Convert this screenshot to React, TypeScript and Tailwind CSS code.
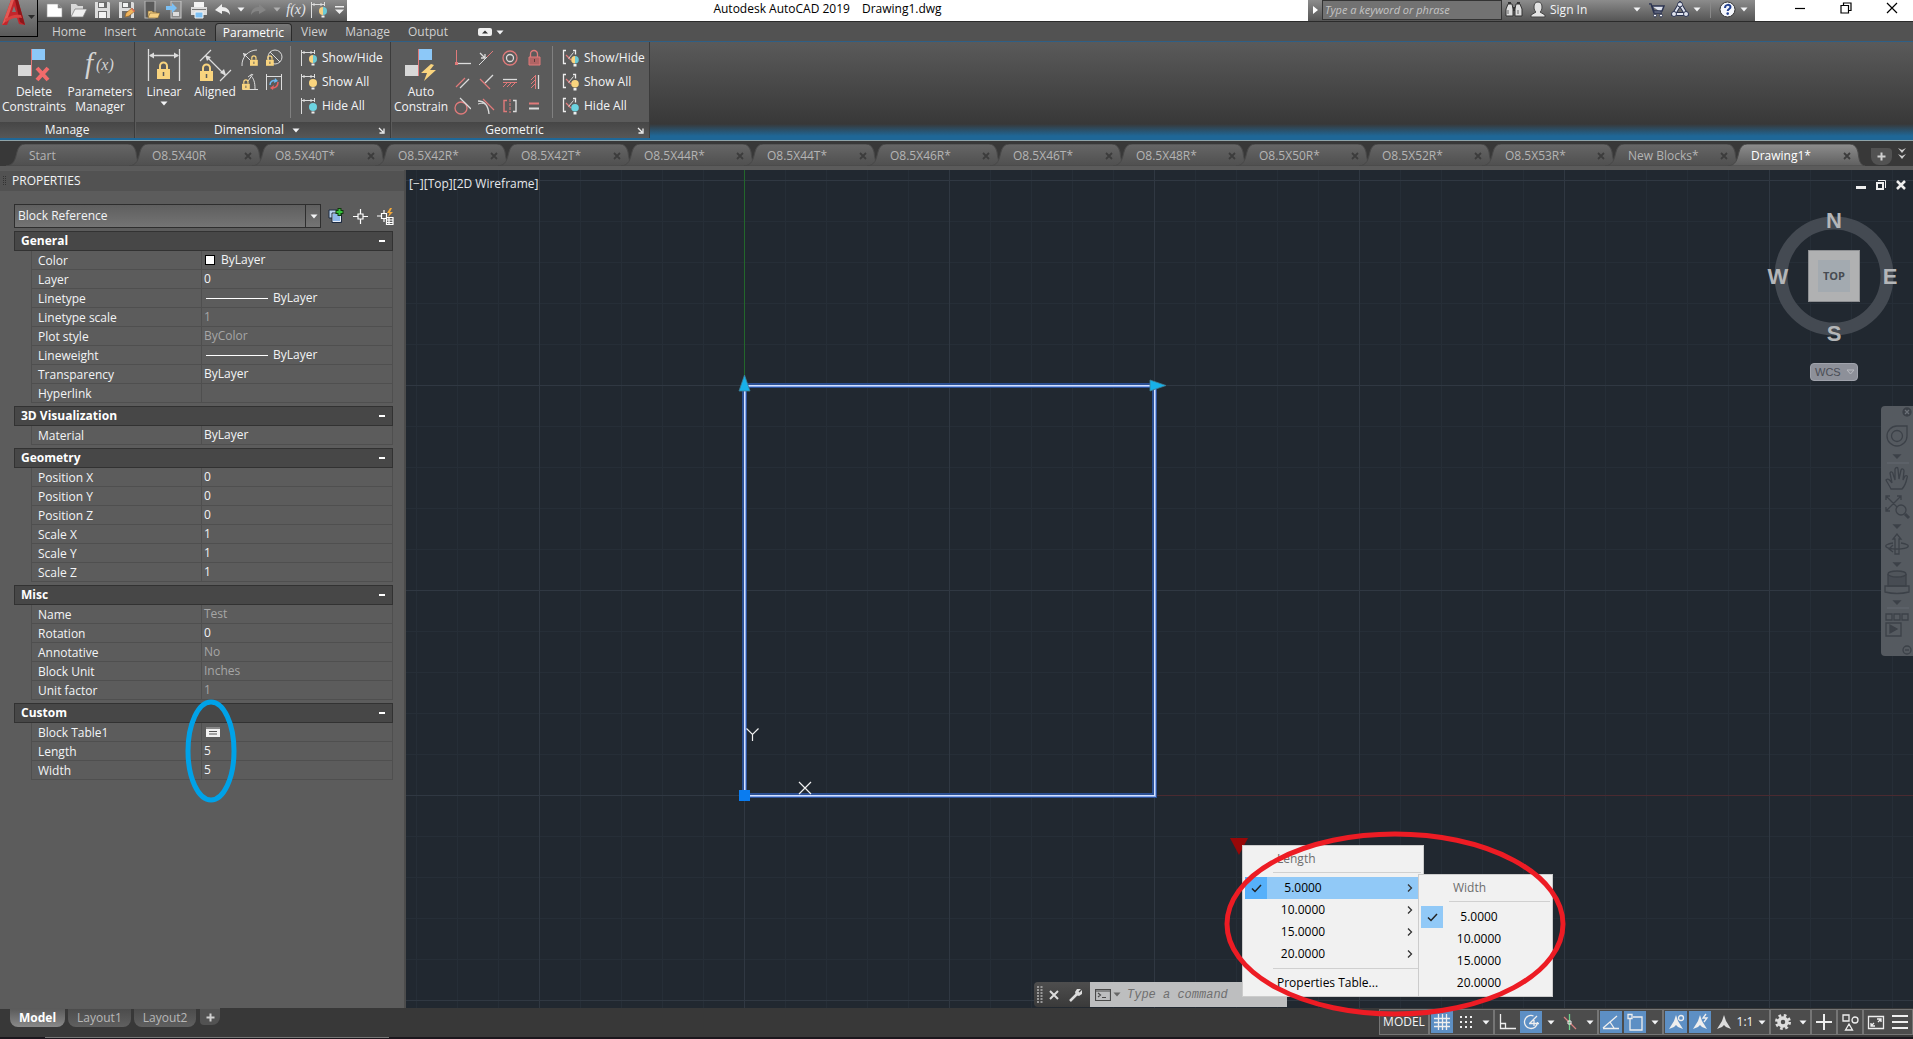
import React from 'react';

interface PropertyRow {
  name: string;
  value: string;
  muted?: boolean;
  kind?: 'swatch' | 'line' | 'table';
}

interface PropertySection {
  title: string;
  rows: PropertyRow[];
}

const ribbonTabs = ['Home', 'Insert', 'Annotate', 'Parametric', 'View', 'Manage', 'Output'];

const fileTabs = [
  'Start',
  'O8.5X40R',
  'O8.5X40T*',
  'O8.5X42R*',
  'O8.5X42T*',
  'O8.5X44R*',
  'O8.5X44T*',
  'O8.5X46R*',
  'O8.5X46T*',
  'O8.5X48R*',
  'O8.5X50R*',
  'O8.5X52R*',
  'O8.5X53R*',
  'New Blocks*',
  'Drawing1*',
];

const sections: PropertySection[] = [
  {
    title: 'General',
    rows: [
      { name: 'Color', value: 'ByLayer', kind: 'swatch' },
      { name: 'Layer', value: '0' },
      { name: 'Linetype', value: 'ByLayer', kind: 'line' },
      { name: 'Linetype scale', value: '1', muted: true },
      { name: 'Plot style', value: 'ByColor', muted: true },
      { name: 'Lineweight', value: 'ByLayer', kind: 'line' },
      { name: 'Transparency', value: 'ByLayer' },
      { name: 'Hyperlink', value: '' },
    ],
  },
  { title: '3D Visualization', rows: [{ name: 'Material', value: 'ByLayer' }] },
  {
    title: 'Geometry',
    rows: [
      { name: 'Position X', value: '0' },
      { name: 'Position Y', value: '0' },
      { name: 'Position Z', value: '0' },
      { name: 'Scale X', value: '1' },
      { name: 'Scale Y', value: '1' },
      { name: 'Scale Z', value: '1' },
    ],
  },
  {
    title: 'Misc',
    rows: [
      { name: 'Name', value: 'Test', muted: true },
      { name: 'Rotation', value: '0' },
      { name: 'Annotative', value: 'No', muted: true },
      { name: 'Block Unit', value: 'Inches', muted: true },
      { name: 'Unit factor', value: '1', muted: true },
    ],
  },
  {
    title: 'Custom',
    rows: [
      { name: 'Block Table1', value: '', kind: 'table' },
      { name: 'Length', value: '5' },
      { name: 'Width', value: '5' },
    ],
  },
];

const Caret: React.FC<{ className?: string }> = ({ className = 'text-gray-100' }) => (
  <svg width="8" height="5" viewBox="0 0 8 5" className={`shrink-0 ${className}`}>
    <path d="M0.5 0.5h7L4 4.5z" fill="currentColor" />
  </svg>
);

/* ---------- Title bar ---------- */

const quickIcons: { label: string; art: React.ReactNode }[] = [
  {
    label: 'New',
    art: <path d="M1 3h11l4 4v9H1z M12 3v4h4" fill="#fff" stroke="#999" strokeWidth="0.6" />,
  },
  {
    label: 'Open',
    art: (
      <>
        <path d="M1 15V3h5l2 2h5v3" fill="#d8d8d8" />
        <path d="M1 16l4-8h12l-4 8z" fill="#efefef" stroke="#777" strokeWidth="0.7" />
      </>
    ),
  },
  {
    label: 'Save',
    art: (
      <>
        <path d="M1 1h14l1 1v15H1z" fill="#dcdcdc" />
        <path d="M4 1h9v6H4zM4 10h9v7H4z" fill="#6d6d6d" />
        <path d="M5 2h5v4H5zM5 11h7v6H5z" fill="#f2f2f2" />
      </>
    ),
  },
  {
    label: 'Save As',
    art: (
      <>
        <path d="M1 1h14l1 1v15H1z" fill="#dcdcdc" />
        <path d="M4 1h9v6H4zM4 10h9v7H4z" fill="#6d6d6d" />
        <path d="M5 2h5v4H5z" fill="#f2f2f2" />
        <path d="M7 16l1-4 6-5 3 3-6 5z" fill="#f0b45c" stroke="#8a5a20" strokeWidth="0.6" />
        <path d="M13 8l1-1 3 3-1 1z" fill="#d86b5a" />
      </>
    ),
  },
  {
    label: 'Open from Web',
    art: (
      <>
        <rect x="3" y="0" width="10" height="17" fill="#5a5a5a" stroke="#b8b8b8" />
        <path d="M6 17l2-5h10l-2 5zM6 16v-6h4l1 1h4" fill="#f5cf82" stroke="#7a6030" strokeWidth="0.6" />
      </>
    ),
  },
  {
    label: 'Save to Web',
    art: (
      <>
        <rect x="5" y="0" width="10" height="17" fill="#8a8a8a" stroke="#c8c8c8" />
        <rect x="7" y="11" width="6" height="4" fill="#ddd" />
        <path d="M0 5h6V2l5 5-5 5V9H0z" fill="#7cc0f4" />
      </>
    ),
  },
  {
    label: 'Plot',
    art: (
      <>
        <path d="M4 1h10v5H4z" fill="#f4f4f4" />
        <path d="M1 6h16v8H1z" fill="#dedede" />
        <path d="M2 8h14v1H2z" fill="#777" />
        <path d="M5 11h8v6H5z" fill="#7cc0f4" stroke="#f4f4f4" />
      </>
    ),
  },
  { label: 'Undo', art: <path d="M1 9l7-6v3c5 0 8 3 8 8-2-3-4-4-8-4v3z" fill="#eee" /> },
];

const DimBulb: React.FC<{ left: string; right: string }> = ({ left, right }) => (
  <svg width="18" height="18" viewBox="0 0 18 18" className="shrink-0">
    <path d="M1.5 1v16M1 3.5h13M14.5 1v4M4 2v3M11 2v3" stroke="#ddd" fill="none" />
    <path d="M13 6a4 4 0 0 0 0 8z" fill={left} />
    <path d="M13 6a4 4 0 0 1 0 8z" fill={right} />
    <path d="M11.5 14.5h3v2h-3z" fill="#eee" />
  </svg>
);

const GeoBulb: React.FC<{ left: string; right: string }> = ({ left, right }) => (
  <svg width="18" height="18" viewBox="0 0 18 18" className="shrink-0">
    <path d="M4 1.5H1.5v13H4M11 1.5h2.5v4" stroke="#eee" strokeWidth="1.3" fill="none" />
    <path d="M4 6l5 5" stroke="#e07a7a" strokeWidth="1.2" />
    <path d="M6.5 9.5l5-6" stroke="#ddd" />
    <path d="M13 7a3.8 3.8 0 0 0 0 7.6z" fill={left} />
    <path d="M13 7a3.8 3.8 0 0 1 0 7.6z" fill={right} />
    <path d="M11.5 15h3v2.5h-3z" fill="#eee" />
  </svg>
);

const TitleBar = () => (
  <header className="flex h-[22px] shrink-0 justify-between border-b border-[#2b2b2b] bg-white">
    <div className="flex w-[347px] items-center bg-linear-to-b from-[#8c8c8c] to-[#555] pb-[2px] pl-[43px]">
      {quickIcons.map((icon) => (
        <button key={icon.label} aria-label={icon.label} className="flex w-6 justify-center">
          <svg width="18" height="18" viewBox="0 0 18 18">
            {icon.art}
          </svg>
        </button>
      ))}
      <button aria-label="Undo list" className="flex w-3 justify-center">
        <Caret />
      </button>
      <button aria-label="Redo" className="flex w-[22px] justify-center">
        <svg width="18" height="18" viewBox="0 0 18 18">
          <path d="M17 9l-7-6v3c-5 0-8 3-8 8 2-3 4-4 8-4v3z" fill="#858585" />
        </svg>
      </button>
      <button aria-label="Redo list" className="flex w-4 justify-center">
        <Caret className="text-[#b0b0b0]" />
      </button>
      <button className="w-[22px] font-['Liberation_Serif'] text-sm leading-4 text-gray-200 italic">f(x)</button>
      <button aria-label="Dimensional constraints" className="flex w-6 justify-center">
        <DimBulb left="#f5cf82" right="#6cc9d4" />
      </button>
      <button aria-label="Customize" className="flex w-4 justify-center">
        <svg width="9" height="8" viewBox="0 0 9 8">
          <path d="M0 0h9v1.5H0zM0 3.5h9L4.5 8z" fill="#eee" />
        </svg>
      </button>
    </div>

    <div className="flex items-center gap-3 pb-1 text-xs text-black">
      <span>Autodesk AutoCAD 2019</span>
      <span>Drawing1.dwg</span>
    </div>

    <div className="flex">
      <div className="flex w-[447px] items-center bg-linear-to-b from-[#8c8c8c] to-[#555] pb-[2px]">
        <button aria-label="Collapse search" className="flex w-[14px] justify-center">
          <svg width="5" height="8" viewBox="0 0 5 8">
            <path d="M0 0l5 4-5 4z" fill="#fff" />
          </svg>
        </button>
        <input
          aria-label="Search"
          placeholder="Type a keyword or phrase"
          className="h-5 w-[180px] border border-[#333] bg-[#727272] px-[2px] pb-px text-[11px] text-white italic placeholder:text-[#c4c4c4]"
        />
        <button aria-label="Find" className="flex w-[23px] justify-center">
          <svg width="18" height="17" viewBox="0 0 18 17">
            <path d="M3 3h4l1 5v7H1V8zM11 3h4l2 5v7h-7V8z" fill="#dedede" stroke="#333" />
            <path d="M8 6h2v4H8zM3 1h3v2H3zM12 1h3v2h-3z" fill="#333" />
            <path d="M3 9v4M13 9v4" stroke="#666" />
          </svg>
        </button>
        <button className="flex w-[116px] items-center gap-1 pl-[5px] text-xs text-gray-100">
          <svg width="16" height="17" viewBox="0 0 16 17">
            <path d="M8 1c3 0 4 2 4 5s-1 4-2 5l5 3v2H1v-2l5-3c-1-1-2-2-2-5s1-5 4-5z" fill="#e4e4e4" stroke="#444" />
          </svg>
          Sign In
          <span className="ml-auto">
            <Caret />
          </span>
        </button>
        <button aria-label="App store" className="flex w-[30px] justify-center">
          <svg width="17" height="16" viewBox="0 0 17 16">
            <path d="M1 2h2l3 9h8M4 4h12l-2 5H6z" fill="#dfe3ee" stroke="#2b3350" strokeWidth="1.5" />
            <circle cx="7" cy="13.5" r="1.5" fill="#fff" stroke="#2b3350" />
            <circle cx="13" cy="13.5" r="1.5" fill="#fff" stroke="#2b3350" />
          </svg>
        </button>
        <button aria-label="Stay connected" className="flex w-[34px] items-center gap-1">
          <svg width="18" height="17" viewBox="0 0 18 17">
            <path d="M9 3L3 13h12z" fill="none" stroke="#2b3350" strokeWidth="4" />
            <path d="M9 3L3 13h12z" fill="none" stroke="#dfe3ee" strokeWidth="2" />
            <circle cx="9" cy="3.5" r="2.5" fill="#dfe3ee" stroke="#2b3350" />
            <circle cx="3" cy="13" r="2.5" fill="#dfe3ee" stroke="#2b3350" />
            <circle cx="15" cy="13" r="2.5" fill="#dfe3ee" stroke="#2b3350" />
          </svg>
          <Caret />
        </button>
        <button aria-label="Help" className="ml-[5px] flex items-center gap-1 border-l border-[#888] pl-2">
          <svg width="17" height="17" viewBox="0 0 17 17">
            <circle cx="8.5" cy="8.5" r="7.5" fill="#f4f6fb" stroke="#333" />
            <path d="M6 7c0-4 5.5-4 5.5-1 0 2-2.8 2-2.8 4" fill="none" stroke="#23408e" strokeWidth="2" />
            <circle cx="8.7" cy="12.6" r="1.3" fill="#23408e" />
          </svg>
          <Caret />
        </button>
      </div>
      {['Minimize', 'Restore', 'Close'].map((name) => (
        <button key={name} aria-label={name} className="flex w-[46px] justify-center pt-[2px] pl-1 first-of-type:ml-5">
          <svg width="12" height="12" viewBox="0 0 12 12" fill="none" stroke="#000" strokeWidth="1.2">
            {name === 'Minimize' && <path d="M1 6.5h10" />}
            {name === 'Restore' && <path d="M1 3.5h7.5V11H1zM3.5 3.5V1H11v7.5H8.5" />}
            {name === 'Close' && <path d="M1 1l10 10M11 1L1 11" />}
          </svg>
        </button>
      ))}
    </div>
  </header>
);

/* ---------- Ribbon ---------- */

const Padlock: React.FC<{ x: number; y: number; s?: number }> = ({ x, y, s = 1 }) => (
  <g transform={`translate(${x} ${y}) scale(${s})`}>
    <path d="M3 8V5a3.5 3.5 0 0 1 7 0v3" fill="none" stroke="#f9d47e" strokeWidth="2" />
    <path d="M0 8h13v10H0z" fill="#f9d47e" />
    <path d="M6.5 11v4" stroke="#5b5b5b" strokeWidth="1.5" />
  </g>
);

const BigButton: React.FC<{
  lines: string[];
  className: string;
  caret?: boolean;
  children: React.ReactNode;
}> = ({ lines, className, caret, children }) => (
  <button className={`flex flex-col items-center pt-[6px] text-xs leading-[15px] text-gray-100 ${className}`}>
    <svg width="34" height="34" viewBox="0 0 34 34" className="mb-[2px]">
      {children}
    </svg>
    {lines.map((line) => (
      <span key={line}>{line}</span>
    ))}
    {caret && (
      <span className="pt-[2px]">
        <Caret />
      </span>
    )}
  </button>
);

const SmallIcon: React.FC<{ label: string; children: React.ReactNode }> = ({ label, children }) => (
  <button aria-label={label} className="flex h-6 w-6 items-center justify-center">
    <svg width="18" height="18" viewBox="0 0 18 18" fill="none">
      {children}
    </svg>
  </button>
);

const PanelTitle: React.FC<{ title: string; caret?: boolean; launcher?: boolean }> = ({ title, caret, launcher }) => (
  <div className="flex h-4 items-center bg-linear-to-b from-[#464646] to-[#575757] text-xs leading-4 text-gray-100">
    <span className="flex flex-1 items-center justify-center gap-2">
      {title}
      {caret && <Caret />}
    </span>
    {launcher && (
      <button aria-label={`${title} settings`} className="w-3">
        <svg width="7" height="7" viewBox="0 0 7 7">
          <path d="M1 1l4 4M6 1.5V6H1.5" stroke="#eee" strokeWidth="1.3" fill="none" />
        </svg>
      </button>
    )}
  </div>
);

const visibility = [
  { label: 'Show/Hide', left: '#f9d47e', right: '#6cc9d4' },
  { label: 'Show All', left: '#f9d47e', right: '#f9d47e' },
  { label: 'Hide All', left: '#6cd3e0', right: '#6cd3e0' },
];

const VisibilityList: React.FC<{ geometric?: boolean }> = ({ geometric }) => (
  <div className="my-1 flex flex-1 flex-col border-l border-[#808080] pl-[9px]">
    {visibility.map((v) => (
      <button key={v.label} className="flex h-6 items-center gap-1 text-xs text-gray-100">
        {geometric ? <GeoBulb left={v.left} right={v.right} /> : <DimBulb left={v.left} right={v.right} />}
        {v.label}
      </button>
    ))}
  </div>
);

const red = '#e07a7a';
const light = '#dcdcdc';

const Ribbon = () => (
  <>
    <nav className="flex h-5 shrink-0 items-end border-b border-[#2f5f85] bg-[#525252] pl-[43px] text-xs">
      {ribbonTabs.map((tab) => (
        <button
          key={tab}
          className={
            tab === 'Parametric'
              ? 'h-[18px] rounded-t-sm border border-b-0 border-[#2a2a2a] bg-linear-to-b from-[#777] to-[#5b5b5b] px-[7px] leading-4 text-white'
              : 'h-[18px] px-[9px] leading-4 text-[#d0d0d0]'
          }
        >
          {tab}
        </button>
      ))}
      <button aria-label="Minimize ribbon" className="flex h-[18px] items-center gap-1 pl-[21px]">
        <svg width="14" height="8" viewBox="0 0 14 8">
          <rect width="14" height="8" rx="2" fill="#eee" />
          <path d="M4 5.5h6L7 2.5z" fill="#333" />
        </svg>
        <Caret />
      </button>
    </nav>

    <div className="flex h-[99px] shrink-0 border-b border-[#8fa3a8] bg-[linear-gradient(to_bottom,#5a5a5a_0px,#383838_82px,#1f6797_94px)] pb-[2px]">
      <section className="flex w-[135px] flex-col border-r border-[#3c3c3c] bg-[#5b5b5b]">
        <div className="flex flex-1">
          <BigButton lines={['Delete', 'Constraints']} className="w-[68px]">
            <path d="M15 1h13v11H15z" fill="#8cc8f8" />
            <path d="M1 17h13v11H1z" fill="#d8d8d8" />
            <path d="M14.5 1v27" stroke={red} />
            <path d="M20 20l11 12M31 20L20 32" stroke="#f26b6b" strokeWidth="4" />
          </BigButton>
          <BigButton lines={['Parameters', 'Manager']} className="w-[64px]">
            <text x="2" y="25" fill="#d4d4d4" fontSize="29" fontStyle="italic" fontFamily="Liberation Serif, serif">
              f
            </text>
            <text x="13" y="22" fill="#d4d4d4" fontSize="16" fontStyle="italic" fontFamily="Liberation Serif, serif">
              (x)
            </text>
          </BigButton>
        </div>
        <PanelTitle title="Manage" />
      </section>

      <section className="flex w-[256px] flex-col border-r border-[#3c3c3c] bg-[#5b5b5b] pl-px">
        <div className="flex flex-1">
          <BigButton lines={['Linear']} caret className="w-14">
            <path d="M1.5 1v32M32.5 1v32M3 7.5h28" stroke={light} strokeWidth="1.3" />
            <path d="M2 7.5l5-3v6zM32 7.5l-5-3v6z" fill={light} />
            <Padlock x={10} y={13} />
          </BigButton>
          <BigButton lines={['Aligned']} className="w-[46px]">
            <path d="M2 13L13 2M22 33l11-11M8 8l19 19" stroke={light} strokeWidth="1.2" />
            <path d="M7 7l6 2-4 4zM28 27l-2-6-4 4z" fill={light} />
            <Padlock x={2} y={15} />
          </BigButton>
          <div className="grid w-12 grid-cols-2 content-start pt-1">
            <SmallIcon label="Radius">
              <path d="M1 17A15 15 0 0 1 16 1M2 4l9 9" stroke={light} />
              <path d="M2 4l4 1-3 3z" fill={light} />
              <Padlock x={9} y={6} s={0.6} />
            </SmallIcon>
            <SmallIcon label="Diameter">
              <circle cx="10" cy="8" r="7" stroke={light} />
              <path d="M5 3l10 10" stroke={light} />
              <Padlock x={1} y={6} s={0.6} />
            </SmallIcon>
            <SmallIcon label="Angular">
              <path d="M7 4l4-3M2 16.5h15M9 2c4 3 5 8 5 14M7 8l5-7" stroke={light} />
              <Padlock x={1} y={6} s={0.6} />
            </SmallIcon>
            <SmallIcon label="Convert">
              <path d="M1.5 1v16M16.5 1v16M2 3.5h14" stroke={light} />
              <path d="M5 12c0-4 3-5 6-4" stroke="#6cb8f0" strokeWidth="1.5" />
              <path d="M13 9c0 4-2 6-6 6" stroke="#e86060" strokeWidth="1.5" />
              <path d="M10 5l3 3-4 2z" fill="#6cb8f0" />
              <path d="M8 17l-3-2 4-3z" fill="#e86060" />
            </SmallIcon>
          </div>
          <div className="w-1" />
          <VisibilityList />
        </div>
        <PanelTitle title="Dimensional" caret launcher />
      </section>

      <section className="flex w-[259px] flex-col border-r border-[#3c3c3c] bg-[#5b5b5b] pl-px">
        <div className="flex flex-1">
          <BigButton lines={['Auto', 'Constrain']} className="w-[58px]">
            <path d="M15 1h13v11H15z" fill="#8cc8f8" />
            <path d="M1 17h13v11H1z" fill="#d8d8d8" />
            <path d="M14.5 1v27" stroke={red} />
            <path d="M27 16l-10 9h6l-3 8 12-11h-6l4-5z" fill="#f9d47e" />
          </BigButton>
          <div className="grid w-24 grid-cols-4 content-start pt-1">
            <SmallIcon label="Coincident">
              <path d="M3.5 1v12" stroke={red} />
              <path d="M5 14.5h13" stroke={light} strokeWidth="1.3" />
              <path d="M2 13h3v3H2z" fill={red} />
            </SmallIcon>
            <SmallIcon label="Collinear">
              <path d="M2 16l8-8" stroke={light} />
              <path d="M10 8l6-6" stroke={red} />
              <path d="M3 4l5 5M8 5v4H4" stroke={light} strokeWidth="1.3" />
            </SmallIcon>
            <SmallIcon label="Concentric">
              <circle cx="9" cy="9" r="7" stroke={red} strokeWidth="1.3" />
              <circle cx="9" cy="9" r="3.5" stroke={light} strokeWidth="1.3" />
            </SmallIcon>
            <SmallIcon label="Fix">
              <path d="M5.5 8V5a3.5 3.5 0 0 1 7 0v3" stroke={red} strokeWidth="1.3" />
              <path d="M4 8h11v8H4z" fill="#b06464" stroke={red} />
              <path d="M9.5 10v3" stroke="#5b3a3a" />
            </SmallIcon>
            <SmallIcon label="Parallel">
              <path d="M3 14l9-9" stroke={red} strokeWidth="1.3" />
              <path d="M7 15l9-9" stroke={light} strokeWidth="1.3" />
            </SmallIcon>
            <SmallIcon label="Perpendicular">
              <path d="M3 6l10 10" stroke={red} strokeWidth="1.3" />
              <path d="M8 10l8-8" stroke={light} strokeWidth="1.3" />
            </SmallIcon>
            <SmallIcon label="Horizontal">
              <path d="M2 6.5h14" stroke={light} strokeWidth="1.3" />
              <path d="M2 9.5h14M6 10l-4 4M10 10l-4 4M14 10l-4 4" stroke={red} />
            </SmallIcon>
            <SmallIcon label="Vertical">
              <path d="M13.5 2v14" stroke={light} strokeWidth="1.3" />
              <path d="M10.5 2v14M10 3L6 7M10 7l-4 4M10 11l-4 4" stroke={red} />
            </SmallIcon>
            <SmallIcon label="Tangent">
              <circle cx="8" cy="11" r="6" stroke={red} strokeWidth="1.3" />
              <path d="M7 1l11 11" stroke={light} strokeWidth="1.3" />
            </SmallIcon>
            <SmallIcon label="Smooth">
              <path d="M1 4c6 0 10 3 11 13" stroke={light} strokeWidth="1.3" />
              <path d="M6 2l11 11" stroke={red} strokeWidth="1.3" />
              <path d="M1 7c3-1 5-1 7 0" stroke={light} />
            </SmallIcon>
            <SmallIcon label="Symmetric">
              <path d="M6 3.5H3v11h3" stroke={red} strokeWidth="1.4" />
              <path d="M9 2v14" stroke={red} strokeDasharray="3 1" />
              <path d="M12 3.5h3v11h-3" stroke={light} strokeWidth="1.4" />
            </SmallIcon>
            <SmallIcon label="Equal">
              <path d="M4 6.5h10" stroke={red} strokeWidth="2" />
              <path d="M4 11.5h10" stroke={light} strokeWidth="2" />
            </SmallIcon>
          </div>
          <div className="w-[6px]" />
          <VisibilityList geometric />
        </div>
        <PanelTitle title="Geometric" launcher />
      </section>
    </div>
  </>
);

/* ---------- Drawing tabs ---------- */

const FileTabs = () => (
  <div className="flex h-[29px] shrink-0 items-start border-b-4 border-[#5b5b5b] bg-[#383838] pt-[3px] pl-[14px]">
    {fileTabs.map((tab) => {
      const active = tab === 'Drawing1*';
      return (
        <div key={tab} className="relative flex h-[22px] w-[123px] shrink items-center pt-[2px]">
          <svg
            className="absolute inset-y-0 -left-2 h-[22px] w-[137px]"
            viewBox="0 0 137 22"
            preserveAspectRatio="none"
          >
            <defs>
              <linearGradient id={active ? 'tabOn' : 'tabOff'} x1="0" y1="0" x2="0" y2="1">
                <stop offset="0" stopColor={active ? '#8d8d8d' : '#666'} />
                <stop offset="1" stopColor={active ? '#5f5f5f' : '#4f4f4f'} />
              </linearGradient>
            </defs>
            <path
              d="M0 22C8 21 9 16 11 8Q13 0 19 0H122Q128 0 130 8C131 16 132 21 137 22z"
              fill={active ? 'url(#tabOn)' : 'url(#tabOff)'}
              stroke="#484848"
            />
          </svg>
          <button
            className={`relative flex-1 pl-[15px] text-left text-xs ${active ? 'text-white' : 'text-[#b4b4b4]'}`}
          >
            {tab}
          </button>
          {tab !== 'Start' && (
            <button aria-label={`Close ${tab}`} className="relative mr-[8px]">
              <svg width="8" height="8" viewBox="0 0 8 8">
                <path d="M1 1l6 6M7 1L1 7" stroke="#3c3c3c" strokeWidth="1.8" />
              </svg>
            </button>
          )}
        </div>
      );
    })}
    <button
      aria-label="New tab"
      className="mt-1 ml-3 flex h-[17px] w-[21px] items-center justify-center rounded-tr-sm rounded-br-lg rounded-bl-lg bg-[#525252]"
    >
      <svg width="9" height="9" viewBox="0 0 9 9">
        <path d="M4.5 0.5v8M0.5 4.5h8" stroke="#d0d0d0" strokeWidth="2" />
      </svg>
    </button>
    <button aria-label="More tabs" className="mt-1 ml-[6px]">
      <svg width="8" height="11" viewBox="0 0 8 11">
        <path d="M0 0l4 2 4-2-4 5zM0 6l4 2 4-2-4 5z" fill="#ccc" />
      </svg>
    </button>
  </div>
);

/* ---------- Properties palette ---------- */

const PropertyValue: React.FC<{ row: PropertyRow }> = ({ row }) => {
  if (row.kind === 'table') {
    return (
      <button aria-label="Block table" className="ml-[2px] block">
        <svg width="14" height="10" viewBox="0 0 14 10">
          <path d="M0 0h14v10H0z" fill="#f2f2f2" />
          <path d="M0 0h14v2H0z" fill="#888" />
          <path d="M3 4.5h8M3 7h8" stroke="#555" />
        </svg>
      </button>
    );
  }
  return (
    <span className="flex items-center">
      {row.kind === 'swatch' && <span className="mr-[6px] ml-px h-[10px] w-[10px] border border-black bg-white" />}
      {row.kind === 'line' && <span className="mr-[5px] ml-[2px] h-px w-[62px] bg-white" />}
      {row.value}
    </span>
  );
};

const PropertiesPalette = () => (
  <aside className="relative flex w-[406px] shrink-0 flex-col border-r-2 border-[#4c4c4c] bg-[#5c5c5c] text-xs text-gray-100">
    <div className="mt-px flex h-5 items-center gap-[6px] bg-[#525252] pl-[3px]">
      <svg width="3" height="10" viewBox="0 0 3 10">
        <path d="M0.5 0v10M2.5 0v10" stroke="#333" strokeDasharray="1 1" />
      </svg>
      <h2>PROPERTIES</h2>
    </div>

    <div className="mt-[13px] flex items-center pl-[14px]">
      <div className="relative w-[307px]">
        <select
          aria-label="Object type"
          className="h-6 w-full appearance-none rounded-none border border-[#2e2e2e] bg-linear-to-b from-[#5f5f5f] to-[#747474] px-[3px] text-xs text-gray-100"
        >
          <option>Block Reference</option>
        </select>
        <span className="pointer-events-none absolute inset-y-0 right-0 flex w-4 items-center justify-center border-l border-[#2e2e2e]">
          <Caret />
        </span>
      </div>
      <button aria-label="Toggle PICKADD" className="ml-[7px]">
        <svg width="16" height="16" viewBox="0 0 16 16">
          <path d="M1 2h8v8H1z" fill="#bcd4f0" stroke="#1c2a40" />
          <path d="M4.5 5.5h8v8h-8z" fill="#8fb8ea" stroke="#e8eef8" />
          <path d="M4 5h9.5v9.5H4z" fill="none" stroke="#1c2a40" />
          <path d="M11.5 0v8M7.5 4h8" stroke="#12370f" strokeWidth="4" />
          <path d="M11.5 1v6M8.5 4h6" stroke="#37c13c" strokeWidth="2" />
        </svg>
      </button>
      <button aria-label="Select objects" className="ml-[9px]">
        <svg width="15" height="15" viewBox="0 0 15 15" fill="none" stroke="#fff" strokeWidth="1.2">
          <path d="M7.5 0v5M7.5 10v5M0 7.5h5M10 7.5h5M5 5h5v5H5z" />
        </svg>
      </button>
      <button aria-label="Quick select" className="ml-[9px]">
        <svg width="17" height="17" viewBox="0 0 17 17" fill="none" stroke="#fff" strokeWidth="1.2">
          <path d="M7 2v4M7 11v3M0 8h4M4.5 5.5h5v5h-5z" />
          <path d="M9.5 9.5h6.5V16.5H9.5zM9.5 12h6.5M9.5 14.5h6.5M12 9.5v7" />
          <path d="M13 0l-3 5h2.5L11 9l5-5h-3l2-4z" fill="#f4a93a" stroke="none" />
        </svg>
      </button>
    </div>

    <div className="mt-[3px] flex flex-col gap-[3px] pr-[11px] pl-[14px]">
      {sections.map((section) => (
        <section key={section.title}>
          <button className="flex h-5 w-full items-center justify-between border border-[#323232] bg-[#474747] pr-[7px] pl-[6px] font-bold text-white">
            {section.title}
            <span className="h-[2px] w-[6px] bg-white" />
          </button>
          <table className="ml-[17px] w-[362px] table-fixed border-separate border-spacing-0">
            <tbody>
              {section.rows.map((row) => (
                <tr key={row.name}>
                  <th
                    scope="row"
                    className="h-[19px] w-[170px] border-b border-l border-[#4f4f4f] p-0 pt-[2px] pl-[6px] text-left leading-4 font-normal"
                  >
                    {row.name}
                  </th>
                  <td
                    className={`h-[19px] border-x border-b border-[#4f4f4f] p-0 pl-[2px] leading-[18px] ${row.muted ? 'text-[#a6a6a6]' : ''}`}
                  >
                    <PropertyValue row={row} />
                  </td>
                </tr>
              ))}
            </tbody>
          </table>
        </section>
      ))}
    </div>

    {/* Markup around the custom values */}
    <svg className="pointer-events-none absolute top-[528px] left-[183px]" width="56" height="106" viewBox="0 0 56 106">
      <ellipse cx="28" cy="53" rx="23" ry="49" fill="none" stroke="#00a2e8" strokeWidth="5" />
    </svg>
  </aside>
);

/* ---------- Canvas ---------- */

const Check = () => (
  <svg width="11" height="9" viewBox="0 0 11 9">
    <path d="M1 4.5l3 3L10 1" stroke="#222" strokeWidth="1.5" fill="none" />
  </svg>
);

const LengthMenu = () => (
  <div className="absolute top-[675px] left-[836px] w-[182px] border border-[#ccc] bg-[#f1f1f1] p-[2px] text-xs text-black">
    <p className="h-6 pl-[32px] leading-[22px] text-[#6d6d6d]">Length</p>
    <hr className="mb-1 ml-7 border-[#d0d0d0]" />
    <ul>
      {['5.0000', '10.0000', '15.0000', '20.0000'].map((size, i) => (
        <li key={size}>
          <button className={`flex h-[22px] w-full items-center pr-2 ${i === 0 ? 'bg-[#91c9f7]' : ''}`}>
            <span className={`flex h-full w-[22px] items-center justify-center ${i === 0 ? 'bg-[#56b0fa]' : ''}`}>
              {i === 0 && <Check />}
            </span>
            <span className="ml-[11px] w-[50px] text-center">{size}</span>
            <svg width="6" height="8" viewBox="0 0 6 8" className="ml-auto">
              <path d="M1 0.5L4.5 4 1 7.5" stroke="#333" strokeWidth="1.3" fill="none" />
            </svg>
          </button>
        </li>
      ))}
    </ul>
    <hr className="mt-[3px] mb-[3px] ml-7 border-[#d0d0d0]" />
    <button className="block h-[22px] w-full pl-[32px] text-left leading-[22px]">Properties Table...</button>
  </div>
);

const WidthMenu = () => (
  <div className="absolute top-[704px] left-[1012px] w-[135px] border border-[#ccc] bg-[#f1f1f1] p-[2px] text-xs text-black">
    <p className="h-6 pl-[32px] leading-[22px] text-[#6d6d6d]">Width</p>
    <hr className="mb-1 ml-7 border-[#d0d0d0]" />
    <ul>
      {['5.0000', '10.0000', '15.0000', '20.0000'].map((size, i) => (
        <li key={size}>
          <button className="flex h-[22px] w-full items-center">
            <span className={`flex h-full w-[22px] items-center justify-center ${i === 0 ? 'bg-[#91c9f7]' : ''}`}>
              {i === 0 && <Check />}
            </span>
            <span className="ml-[11px] w-[50px] text-center">{size}</span>
          </button>
        </li>
      ))}
    </ul>
  </div>
);

const ViewCube = () => (
  <svg className="absolute top-[36px] right-[10px]" width="138" height="144" viewBox="0 -4 138 144">
    <circle cx="69" cy="66" r="53" fill="none" stroke="#444a52" strokeWidth="13" />
    <g fill="#b4b6b8" fontFamily="Liberation Sans, sans-serif" fontWeight="700" fontSize="22" textAnchor="middle">
      <text x="69" y="18">N</text>
      <text x="69" y="131">S</text>
      <text x="13" y="74">W</text>
      <text x="125" y="74">E</text>
    </g>
    <rect x="43.5" y="40.5" width="51" height="51" fill="#b0b1b2" stroke="#8d8f92" />
    <rect x="53" y="50" width="32" height="32" fill="#a3aab0" />
    <text x="69" y="70" fill="#474c52" fontFamily="Open Sans, sans-serif" fontWeight="700" fontSize="11" textAnchor="middle">
      TOP
    </text>
  </svg>
);

const NavBar = () => (
  <div className="absolute top-[236px] right-0 h-[250px] w-8 rounded-l-sm bg-[#555a60]">
    <svg width="32" height="250" viewBox="0 0 32 250" fill="none" stroke="#3c4148" strokeWidth="1.3">
      <circle cx="26" cy="6" r="4" fill="#3c4148" />
      <path d="M24 4l4 4M28 4l-4 4" stroke="#6b7077" />
      <path d="M16 20h10v10a10 10 0 1 1-10-10z" />
      <circle cx="16" cy="30" r="5.5" />
      <path d="M13 49h6l-3 3z" fill="#3c4148" />
      <path d="M6 57h22" stroke="#61666c" />
      <path d="M10 83c-2-4-4-7-5-9 2-2 4 0 6 3l-2-10c1-2 3-1 3 1l2 6V63c1-2 3-2 3 0l1 10 2-9c1-2 3-1 3 1l-1 9 2-4c2-1 3 0 2 2-1 5-2 8-5 11z" />
      <path d="M5 90l15 15M20 90L5 105M5 94v-4h4M16 90h4v4M5 101v4h4" />
      <circle cx="20" cy="104" r="5" fill="#555a60" />
      <path d="M24 108l4 4" strokeWidth="3" />
      <path d="M13 119h6l-3 3z" fill="#3c4148" />
      <path d="M16 128l-4 5h2v15h4v-15h2z" />
      <path d="M12 137c-12 2-8 6 4 6s16-4 4-6M12 139l-4 4 4 3" />
      <path d="M13 157h6l-3 3z" fill="#3c4148" />
      <path d="M7 168v12h18v-12" fill="#474c53" />
      <ellipse cx="16" cy="168" rx="9" ry="3" fill="#50555b" />
      <path d="M4 180h24v6q-12 3-24 0z" />
      <path d="M13 195h6l-3 3z" fill="#3c4148" />
      <path d="M6 202h22" stroke="#61666c" />
      <path d="M5 208h6v6H5zM13 208h6v6h-6zM21 208h6v6h-6zM5 217h15v13H5z" />
      <path d="M9 219v8l7-4z" fill="#3c4148" />
      <circle cx="26" cy="244" r="4" />
      <path d="M24 244h4" />
    </svg>
  </div>
);

const CommandLine = () => (
  <div className="absolute bottom-px left-[628px] flex h-[25px] w-[253px]">
    <div className="flex w-[56px] items-center gap-[6px] rounded-l-sm bg-linear-to-b from-[#4e4e4e] to-[#3a3a3a] pl-[3px]">
      <svg width="6" height="17" viewBox="0 0 6 17">
        <path d="M1 0v17M4.5 0v17" stroke="#999" strokeWidth="2" strokeDasharray="2 1" />
      </svg>
      <button aria-label="Close command line">
        <svg width="10" height="10" viewBox="0 0 10 10">
          <path d="M1 1l8 8M9 1L1 9" stroke="#ddd" strokeWidth="2" />
        </svg>
      </button>
      <button aria-label="Customize" className="ml-1">
        <svg width="14" height="14" viewBox="0 0 14 14">
          <path d="M1 13l7-7" stroke="#ddd" strokeWidth="2.5" />
          <path d="M12 1L9.5 3.5l1 1L13 2v4l-3 2-3-1-1-3 2-3z" fill="#ddd" />
        </svg>
      </button>
    </div>
    <label className="flex flex-1 items-center bg-[#bdbebf] pl-[5px]">
      <svg width="16" height="12" viewBox="0 0 16 12" fill="none" stroke="#4a4a4a" className="shrink-0">
        <path d="M0.5 0.5h15v11H0.5zM0.5 2h15M3 4l2.5 2L3 8M7 8.5h4" strokeWidth="1.2" />
      </svg>
      <span className="ml-[2px]">
        <Caret className="text-[#666]" />
      </span>
      <input
        aria-label="Command"
        placeholder="Type a command"
        className="ml-[6px] w-full bg-transparent font-['Liberation_Mono'] text-xs italic placeholder:text-[#6f6f6f]"
      />
    </label>
  </div>
);

const Canvas = () => (
  <main className="relative min-w-0 flex-1 bg-[#212830]">
    <svg className="absolute inset-0 h-full w-full" shapeRendering="crispEdges">
      <defs>
        <pattern id="minor" x="10" y="10" width="41" height="41" patternUnits="userSpaceOnUse">
          <path d="M0.5 0v41M0 0.5h41" stroke="#262e37" fill="none" />
        </pattern>
        <pattern id="major" x="133" y="10" width="205" height="205" patternUnits="userSpaceOnUse">
          <path d="M0.5 0v205M0 0.5h205" stroke="#303842" fill="none" />
        </pattern>
      </defs>
      <rect width="100%" height="100%" fill="url(#minor)" />
      <rect width="100%" height="100%" fill="url(#major)" />
      <path d="M338.5 0v215" stroke="#23672b" />
      <rect x="749" y="625" width="100%" height="1" fill="#4a2a30" />
      <path d="M338.5 215.5h410v410h-410z" fill="none" stroke="#2b4f93" strokeWidth="5" />
      <path d="M338.5 215.5h410v410h-410z" fill="none" stroke="#84a6ee" strokeWidth="2" />
      <path d="M338.5 215.5h410v410h-410z" fill="none" stroke="#d5e0fb" />
      <g shapeRendering="auto">
        <path d="M338.5 205l5.5 16h-11z" fill="#17b1ea" stroke="#3f7f96" strokeWidth="0.8" />
        <path d="M760 215.5L744 210v11z" fill="#17b1ea" stroke="#3f7f96" strokeWidth="0.8" />
        <path d="M333 620h11v11h-11z" fill="#0a7cf0" />
        <path
          d="M340.5 558.5l6 6 6-6M346.5 564.5v6.5M393 612l12 12M405 612l-12 12"
          stroke="#f0f0f0"
          strokeWidth="1.2"
          fill="none"
        />
        <path d="M824 668h18l-9 17z" fill="#970808" />
      </g>
    </svg>

    <p className="absolute top-[6px] left-[3px] text-xs leading-4 text-gray-200">[−][Top][2D Wireframe]</p>

    <div className="absolute top-[9px] right-[7px] flex items-center gap-[9px] text-white">
      <button aria-label="Minimize drawing">
        <svg width="10" height="12" viewBox="0 0 10 12">
          <path d="M0 7h10v3H0z" fill="#eee" />
        </svg>
      </button>
      <button aria-label="Restore drawing">
        <svg width="12" height="12" viewBox="0 0 12 12" fill="none" stroke="#eee">
          <path d="M2 4h6v6H2z" strokeWidth="2" />
          <path d="M3 1.5h7.5V9" />
        </svg>
      </button>
      <button aria-label="Close drawing">
        <svg width="10" height="12" viewBox="0 0 10 12">
          <path d="M1 2l8 8M9 2L1 10" stroke="#eee" strokeWidth="2.5" />
        </svg>
      </button>
    </div>

    <ViewCube />
    <button className="absolute top-[193px] right-[55px] flex h-[18px] w-12 items-center gap-[5px] rounded-sm border border-[#a0a3ac] bg-[#8d9099] pl-1 font-['Liberation_Sans'] text-[11px] text-[#4a4d55]">
      WCS
      <svg width="9" height="6" viewBox="0 0 9 6">
        <path d="M1 1h7L4.5 5z" fill="none" stroke="#b8bac0" />
      </svg>
    </button>
    <NavBar />
    <CommandLine />
    <LengthMenu />
    <WidthMenu />

    {/* Markup around the lookup menus */}
    <svg
      className="pointer-events-none absolute top-[658px] left-[816px] z-10"
      width="346"
      height="192"
      viewBox="0 0 346 192"
    >
      <ellipse cx="173" cy="96" rx="168" ry="90" fill="none" stroke="#ed1c24" strokeWidth="5" />
    </svg>
  </main>
);

/* ---------- Status bar ---------- */

const StatusIcon: React.FC<{ label: string; on?: boolean; children: React.ReactNode }> = ({ label, on, children }) => (
  <button
    aria-label={label}
    className={`mx-px flex h-[22px] w-[22px] items-center justify-center ${on ? 'bg-[#5d8fc4]' : ''}`}
  >
    <svg width="18" height="18" viewBox="0 0 18 18" fill="none" stroke="#eee" strokeWidth="1.3">
      {children}
    </svg>
  </button>
);

const StatusCaret = () => (
  <button aria-label="Options" className="flex w-[15px] justify-center">
    <Caret />
  </button>
);

const StatusGroup: React.FC<{ children: React.ReactNode }> = ({ children }) => (
  <div className="flex h-[26px] items-center border border-[#757575] bg-[#4c4c4c] text-xs text-gray-100">{children}</div>
);

const compass = 'M9 2l2 6 5 8-5-2-2-2-2 2-5 2 5-8z';

const StatusBar = () => (
  <footer className="shrink-0 bg-[#383838]">
    <div className="flex h-[29px] items-start justify-between">
      <div className="flex border-t border-[#5b5b5b] pl-[10px] text-xs">
        {['Model', 'Layout1', 'Layout2'].map((tab) => (
          <button
            key={tab}
            className={
              tab === 'Model'
                ? 'h-[18px] rounded-b-lg bg-linear-to-b from-[#5b5b5b] to-[#8a8a8a] px-[9px] leading-4 font-bold text-white'
                : 'ml-[3px] h-[18px] rounded-b-lg bg-linear-to-b from-[#4c4c4c] to-[#606060] px-[9px] leading-4 text-[#b8b8b8]'
            }
          >
            {tab}
          </button>
        ))}
        <button
          aria-label="New layout"
          className="ml-1 flex h-4 w-5 items-center justify-center rounded-br-lg rounded-bl-sm bg-[#525252]"
        >
          <svg width="9" height="9" viewBox="0 0 9 9">
            <path d="M4.5 0.5v8M0.5 4.5h8" stroke="#d0d0d0" strokeWidth="2" />
          </svg>
        </button>
      </div>

      <div className="flex pt-px">
        <StatusGroup>
          <button className="w-12 text-center">MODEL</button>
        </StatusGroup>
        <StatusGroup>
          <StatusIcon label="Grid" on>
            <path d="M5.5 1v16M9.5 1v16M13.5 1v16M1 5.5h16M1 9.5h16M1 13.5h16" />
          </StatusIcon>
          <StatusIcon label="Snap">
            <path d="M3 4h14M3 9h14M3 14h14" strokeWidth="2" strokeDasharray="2 3" />
          </StatusIcon>
          <StatusCaret />
        </StatusGroup>
        <StatusGroup>
          <StatusIcon label="Ortho">
            <path d="M2.5 1v14.5H18M2.5 10.5h5v5" />
          </StatusIcon>
          <StatusIcon label="Polar tracking" on>
            <path d="M15.5 9a6.5 6.5 0 1 1-4-6M8 10l7-7M7 10.5h10M12 7v6" />
          </StatusIcon>
          <StatusCaret />
          <StatusIcon label="Isodraft">
            <path d="M3 4l12 12" stroke="#d88080" />
            <path d="M8.5 1v16" stroke="#6fd08a" />
            <path d="M7 8h3v3H7z" strokeWidth="1" />
          </StatusIcon>
          <StatusCaret />
        </StatusGroup>
        <StatusGroup>
          <StatusIcon label="Object snap tracking" on>
            <path d="M1 15L15 3M1 15.5h16M8 9l4 6" />
          </StatusIcon>
          <StatusIcon label="Object snap" on>
            <path d="M4 6v11h12V4H7M2 1.5h4v4H2z" />
          </StatusIcon>
          <StatusCaret />
        </StatusGroup>
        <StatusGroup>
          <StatusIcon label="Annotation visibility" on>
            <path d={compass} fill="#eee" strokeWidth="0" />
            <circle cx="14" cy="5" r="2.5" />
          </StatusIcon>
          <StatusIcon label="Auto scale" on>
            <path d={compass} fill="#eee" strokeWidth="0" />
            <path d="M15 1l-3 4h4l-3 4" />
          </StatusIcon>
          <StatusIcon label="Annotation scale">
            <path d={compass} fill="#ddd" strokeWidth="0" />
          </StatusIcon>
          <button className="w-[18px]">1:1</button>
          <StatusCaret />
        </StatusGroup>
        <StatusGroup>
          <StatusIcon label="Workspace">
            <circle cx="9" cy="9" r="4" stroke="#ddd" strokeWidth="3.5" />
            <circle cx="9" cy="9" r="6.5" stroke="#ddd" strokeWidth="3" strokeDasharray="2.6 2.5" />
          </StatusIcon>
          <StatusCaret />
        </StatusGroup>
        <StatusGroup>
          <StatusIcon label="Annotation monitor">
            <path d="M9 1v16M1 9h16" strokeWidth="2" />
          </StatusIcon>
        </StatusGroup>
        <StatusGroup>
          <StatusIcon label="Isolate objects">
            <path d="M2 2h6v6H2zM8 11l3.5 6h-7z" />
            <circle cx="14" cy="7" r="3" />
          </StatusIcon>
        </StatusGroup>
        <StatusGroup>
          <StatusIcon label="Clean screen">
            <path d="M1.5 3.5h15v12h-15zM10 6h4v3M14 6l-3 3M4 10v3h4M4 13l3-3" />
          </StatusIcon>
          <StatusIcon label="Customization">
            <path d="M1 3h16M1 9h16M1 15h16" strokeWidth="2" />
          </StatusIcon>
        </StatusGroup>
      </div>
    </div>
    <div className="h-[2px] bg-[#1b171d] pl-[45px]">
      <div className="h-px w-[344px] bg-[#777]" />
    </div>
  </footer>
);

const App: React.FC = () => {
  return (
    <div className="relative flex h-screen min-h-[900px] flex-col overflow-hidden bg-[#383838] font-['Open_Sans',sans-serif]">
      <TitleBar />
      <Ribbon />
      <FileTabs />
      <div className="flex min-h-0 flex-1">
        <PropertiesPalette />
        <Canvas />
      </div>
      <StatusBar />

      {/* Application button sits over the title bar and the ribbon tabs */}
      <button
        aria-label="Application menu"
        className="absolute top-0 left-0 flex h-[37px] w-[38px] items-start border-r border-b border-black bg-linear-to-b from-[#8a8a8a] to-[#5a5a5a]"
      >
        <svg width="37" height="36" viewBox="0 0 37 36">
          <path d="M2 25L11 0h7l7 25-6-1-2-6H10l-3 7z" fill="#c3262c" />
          <path d="M11 0h3L7 20l-5 5z" fill="#e25a55" />
          <path d="M15 0h3l7 25-5-3z" fill="#8e1519" />
          <path d="M12 12l2-6 2 6z" fill="#7a7a7a" />
          <path d="M5 19c6-4 11-5 16-4l1 3c-6-1-11 0-16 4z" fill="#d8413f" />
          <path d="M28 15h7l-3.5 4z" fill="#2c2c2c" />
        </svg>
      </button>
    </div>
  );
};

export default App;
